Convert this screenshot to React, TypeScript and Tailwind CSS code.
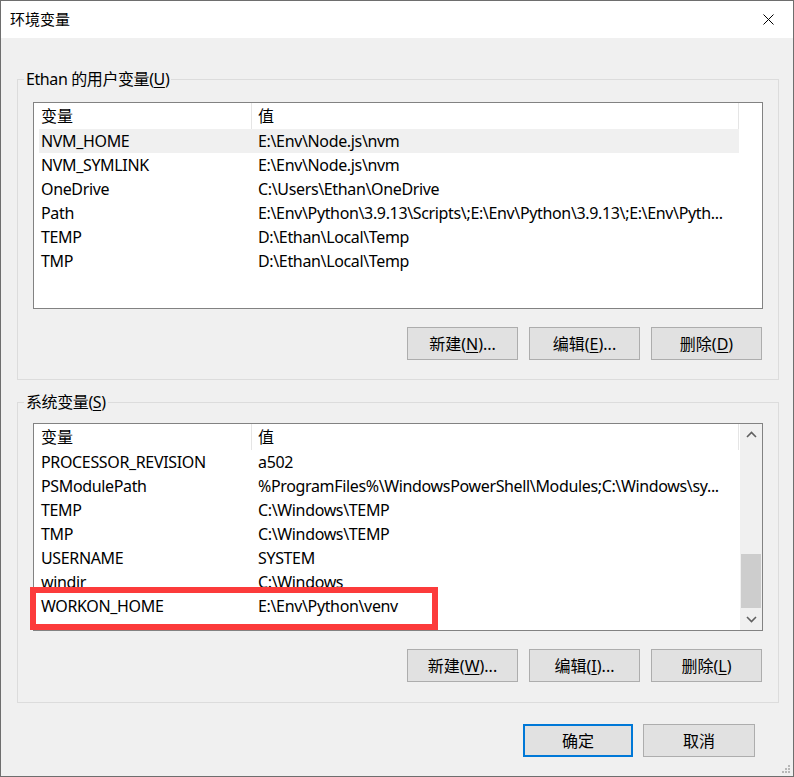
import React from "react";

const userVars: [string, string][] = [
  ["NVM_HOME", "E:\\Env\\Node.js\\nvm"],
  ["NVM_SYMLINK", "E:\\Env\\Node.js\\nvm"],
  ["OneDrive", "C:\\Users\\Ethan\\OneDrive"],
  ["Path", "E:\\Env\\Python\\3.9.13\\Scripts\\;E:\\Env\\Python\\3.9.13\\;E:\\Env\\Pyth..."],
  ["TEMP", "D:\\Ethan\\Local\\Temp"],
  ["TMP", "D:\\Ethan\\Local\\Temp"],
];

const sysVars: [string, string][] = [
  ["PROCESSOR_REVISION", "a502"],
  ["PSModulePath", "%ProgramFiles%\\WindowsPowerShell\\Modules;C:\\Windows\\sy..."],
  ["TEMP", "C:\\Windows\\TEMP"],
  ["TMP", "C:\\Windows\\TEMP"],
  ["USERNAME", "SYSTEM"],
  ["windir", "C:\\Windows"],
  ["WORKON_HOME", "E:\\Env\\Python\\venv"],
];

function Header() {
  return (
    <div className="flex h-[26px] shrink-0">
      <div className="w-[218px] shrink-0 border-r border-[#e5e5e5] pl-[7px] flex items-center">变量</div>
      <div className="w-[487px] shrink-0 border-r border-[#e5e5e5] pl-[6px] flex items-center">值</div>
    </div>
  );
}

function Row({ name, value, selected }: { name: string; value: string; selected?: boolean }) {
  return (
    <div
      className={
        "flex h-[24px] shrink-0 items-center ml-[5px] w-[700px] whitespace-nowrap overflow-hidden tracking-[-0.35px] " +
        (selected ? "bg-[#f0f0f0]" : "")
      }
    >
      <div className="w-[212px] shrink-0 pl-[2px]">{name}</div>
      <div className="pl-[7px]">{value}</div>
    </div>
  );
}

function Btn({ label, u, after }: { label: string; u: string; after?: string }) {
  return (
    <button className="w-[111px] h-[33px] border border-[#adadad] bg-[#e1e1e1] text-[16px] leading-none flex items-center justify-center">
      {label}(<span className="underline underline-offset-2">{u}</span>){after}
    </button>
  );
}

function Chevron({ up }: { up?: boolean }) {
  return (
    <svg width="11" height="7" viewBox="0 0 11 7">
      <path
        d={up ? "M1 6 L5.5 1.5 L10 6" : "M1 1 L5.5 5.5 L10 1"}
        fill="none"
        stroke="#606060"
        strokeWidth="1.6"
      />
    </svg>
  );
}

export default function App() {
  return (
    <div className="relative w-[794px] h-[777px] border border-[#6e6e6e] bg-[#f0f0f0] flex flex-col text-black text-[16px] font-['Noto_Sans','Noto_Sans_CJK_SC',sans-serif]">
      {/* Title bar */}
      <div className="h-[37px] shrink-0 bg-white flex items-center justify-between pl-[9px] pr-[19px]">
        <span className="text-[15px] leading-none">环境变量</span>
        <svg width="11" height="11" viewBox="0 0 11 11">
          <path d="M0.5 0.5 L10.5 10.5 M10.5 0.5 L0.5 10.5" stroke="#000" strokeWidth="1" />
        </svg>
      </div>

      <div className="flex-1 flex flex-col pl-[16px] pr-[16px] pt-[31px]">
        {/* User variables */}
        <fieldset className="w-[762px] border border-[#dcdcdc] px-[15px] pb-[19px]">
          <legend className="ml-[-9px] px-[2px] leading-[20px] tracking-[-0.4px]">
            Ethan 的用户变量(<span className="underline underline-offset-2">U</span>)
          </legend>
          <div className="mt-[13px] h-[207px] border border-[#828282] bg-white flex flex-col overflow-hidden">
            <Header />
            {userVars.map(([n, v], i) => (
              <Row key={n} name={n} value={v} selected={i === 0} />
            ))}
          </div>
          <div className="mt-[18px] flex justify-end gap-[11px] pr-[1px]">
            <Btn label="新建" u="N" after="..." />
            <Btn label="编辑" u="E" after="..." />
            <Btn label="删除" u="D" />
          </div>
        </fieldset>

        {/* System variables */}
        <fieldset className="mt-[12px] w-[762px] border border-[#dcdcdc] px-[15px] pb-[20px]">
          <legend className="ml-[-9px] px-[2px] leading-[20px] tracking-[-0.4px]">
            系统变量(<span className="underline underline-offset-2">S</span>)
          </legend>
          <div className="relative mt-[11px]">
            <div className="h-[208px] border border-[#828282] bg-white flex overflow-hidden">
              <div className="flex-1 flex flex-col overflow-hidden">
                <Header />
                {sysVars.map(([n, v]) => (
                  <Row key={n} name={n} value={v} />
                ))}
              </div>
              <div className="w-[22px] shrink-0 bg-[#f0f0f0] flex flex-col">
                <div className="h-[21px] flex items-center justify-center">
                  <Chevron up />
                </div>
                <div className="flex-1 flex flex-col justify-end">
                  <div className="h-[54px] mx-[1px] bg-[#cdcdcd]" />
                </div>
                <div className="h-[22px] flex items-center justify-center">
                  <Chevron />
                </div>
              </div>
            </div>
            <div className="absolute left-[-3px] top-[164px] w-[408px] h-[43px] border-[6px] border-[#fc3b3b]" />
          </div>
          <div className="mt-[18px] flex justify-end gap-[11px] pr-[1px]">
            <Btn label="新建" u="W" after="..." />
            <Btn label="编辑" u="I" after="..." />
            <Btn label="删除" u="L" />
          </div>
        </fieldset>

        {/* Dialog buttons */}
        <div className="mt-[21px] flex justify-end gap-[10px] pr-[22px]">
          <button className="w-[110px] h-[33px] border-2 border-[#0078d7] bg-[#e1e1e1] text-[16px] leading-none flex items-center justify-center">
            确定
          </button>
          <button className="w-[112px] h-[33px] border border-[#adadad] bg-[#e1e1e1] text-[16px] leading-none flex items-center justify-center">
            取消
          </button>
        </div>
      </div>

      {/* Resize grip */}
      <svg className="absolute right-[2px] bottom-[2px]" width="10" height="10" viewBox="0 0 10 10">
        <rect x="7" y="1" width="2" height="2" fill="#b8b8b8" />
        <rect x="4" y="4" width="2" height="2" fill="#b8b8b8" />
        <rect x="7" y="4" width="2" height="2" fill="#b8b8b8" />
        <rect x="1" y="7" width="2" height="2" fill="#b8b8b8" />
        <rect x="4" y="7" width="2" height="2" fill="#b8b8b8" />
        <rect x="7" y="7" width="2" height="2" fill="#b8b8b8" />
      </svg>
    </div>
  );
}
